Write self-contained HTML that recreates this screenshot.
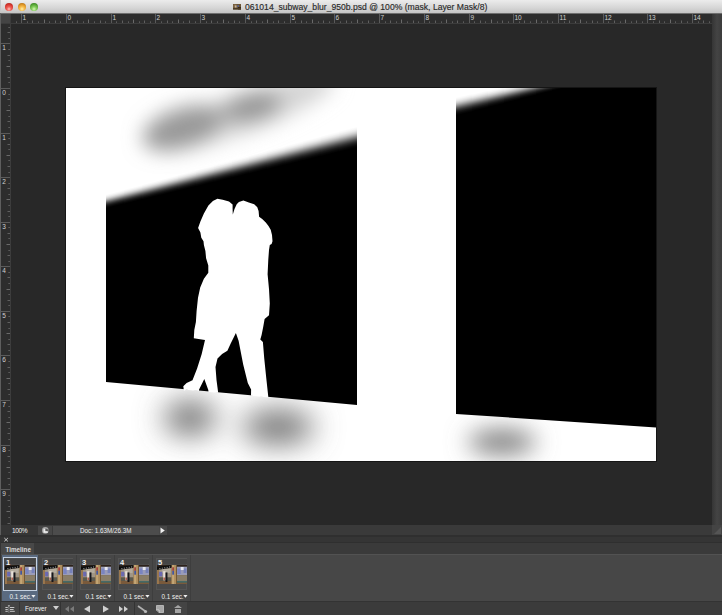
<!DOCTYPE html>
<html><head><meta charset="utf-8">
<style>
*{margin:0;padding:0;box-sizing:border-box}
html,body{width:722px;height:615px;overflow:hidden;background:#282828;font-family:"Liberation Sans",sans-serif}
.a{position:absolute}
#title{left:0;top:0;width:722px;height:14px;background:linear-gradient(#ececec,#d6d6d6 60%,#c4c4c4);border-bottom:1px solid #6e6e6e}
#title .t{left:245px;top:1.5px;font-size:8.6px;line-height:10px;color:#2a2a2a;white-space:nowrap;letter-spacing:0;-webkit-text-stroke:0.15px #2a2a2a}
.light{width:8px;height:8px;border-radius:50%;top:3px}
#strip{left:0;top:0;width:1px;height:535px;background:linear-gradient(#c8c8c8 0,#c8c8c8 13px,#5e5e5e 13px)}
#strip2{left:0;top:535px;width:1px;height:80px;background:#343434}
#rtop{left:11px;top:14px;width:701px;height:9px;background:#2d2d2d}
#rtopb{left:1px;top:23px;width:711px;height:1px;background:#3c3c3c}
#corner{left:1px;top:14px;width:10px;height:10px;background:#444}
#rleft{left:1px;top:24px;width:9px;height:501px;background:#2d2d2d}
#rleftb{left:10px;top:14px;width:1px;height:511px;background:#3c3c3c}
#scroll{left:712px;top:14px;width:10px;height:521px;background:linear-gradient(90deg,#353535,#444 50%,#3c3c3c)}
#doc{left:66px;top:88px;width:590px;height:373px;background:#fff;box-shadow:0 0 0 1px #151515}
svg text{font-family:"Liberation Sans",sans-serif}
</style></head><body>
<div class="a" id="title">
  <div class="a light" style="left:5px;background:radial-gradient(circle at 50% 75%,#ffc8c0 0,#f06058 30%,#d83830 60%,#9a2018 100%)"></div>
  <div class="a light" style="left:18px;background:radial-gradient(circle at 50% 75%,#fff0b0 0,#f8c050 30%,#e09828 60%,#a06010 100%)"></div>
  <div class="a light" style="left:30px;background:radial-gradient(circle at 50% 75%,#d8f8b8 0,#88d060 30%,#58a838 60%,#2a7018 100%)"></div>
  <svg class="a" style="left:233px;top:4px" width="8" height="5.5"><rect width="8" height="5.5" fill="#6a5535"/><rect x="0.5" y="0.5" width="3" height="3" fill="#8a7050"/><rect x="2" y="1.5" width="1.5" height="2" fill="#c8b8a0"/><rect x="4.5" y="1" width="1.2" height="2" fill="#5868b0"/><rect x="5" y="3" width="3" height="2.5" fill="#3a2a18"/><rect x="0" y="4" width="8" height="1.5" fill="#4a3a25"/></svg>
  <div class="a t">061014_subway_blur_950b.psd @ 100% (mask, Layer Mask/8)</div>
</div>
<div class="a" id="strip"></div><div class="a" id="strip2"></div>
<div class="a" id="corner"></div>
<svg class="a" id="rtop" width="701" height="9" viewBox="11 0 701 9" style="font-size:6.5px" fill="#d0d0d0"><line x1="16.5" y1="7.3" x2="16.5" y2="9" stroke="#5a5a5a"/><line x1="21.5" y1="0" x2="21.5" y2="9" stroke="#5a5a5a"/><line x1="27.5" y1="7.3" x2="27.5" y2="9" stroke="#5a5a5a"/><line x1="32.5" y1="6.5" x2="32.5" y2="9" stroke="#606060"/><line x1="38.5" y1="7.3" x2="38.5" y2="9" stroke="#5a5a5a"/><line x1="44.5" y1="5.5" x2="44.5" y2="9" stroke="#6a6a6a"/><line x1="49.5" y1="7.3" x2="49.5" y2="9" stroke="#5a5a5a"/><line x1="55.5" y1="6.5" x2="55.5" y2="9" stroke="#606060"/><line x1="60.5" y1="7.3" x2="60.5" y2="9" stroke="#5a5a5a"/><text x="22.5" y="5.8" >1</text><line x1="66.5" y1="0" x2="66.5" y2="9" stroke="#5a5a5a"/><line x1="72.5" y1="7.3" x2="72.5" y2="9" stroke="#5a5a5a"/><line x1="77.5" y1="6.5" x2="77.5" y2="9" stroke="#606060"/><line x1="83.5" y1="7.3" x2="83.5" y2="9" stroke="#5a5a5a"/><line x1="88.5" y1="5.5" x2="88.5" y2="9" stroke="#6a6a6a"/><line x1="94.5" y1="7.3" x2="94.5" y2="9" stroke="#5a5a5a"/><line x1="100.5" y1="6.5" x2="100.5" y2="9" stroke="#606060"/><line x1="105.5" y1="7.3" x2="105.5" y2="9" stroke="#5a5a5a"/><text x="67.5" y="5.8" >0</text><line x1="111.5" y1="0" x2="111.5" y2="9" stroke="#5a5a5a"/><line x1="116.5" y1="7.3" x2="116.5" y2="9" stroke="#5a5a5a"/><line x1="122.5" y1="6.5" x2="122.5" y2="9" stroke="#606060"/><line x1="128.5" y1="7.3" x2="128.5" y2="9" stroke="#5a5a5a"/><line x1="133.5" y1="5.5" x2="133.5" y2="9" stroke="#6a6a6a"/><line x1="139.5" y1="7.3" x2="139.5" y2="9" stroke="#5a5a5a"/><line x1="144.5" y1="6.5" x2="144.5" y2="9" stroke="#606060"/><line x1="150.5" y1="7.3" x2="150.5" y2="9" stroke="#5a5a5a"/><text x="112.5" y="5.8" >1</text><line x1="155.5" y1="0" x2="155.5" y2="9" stroke="#5a5a5a"/><line x1="161.5" y1="7.3" x2="161.5" y2="9" stroke="#5a5a5a"/><line x1="167.5" y1="6.5" x2="167.5" y2="9" stroke="#606060"/><line x1="172.5" y1="7.3" x2="172.5" y2="9" stroke="#5a5a5a"/><line x1="178.5" y1="5.5" x2="178.5" y2="9" stroke="#6a6a6a"/><line x1="183.5" y1="7.3" x2="183.5" y2="9" stroke="#5a5a5a"/><line x1="189.5" y1="6.5" x2="189.5" y2="9" stroke="#606060"/><line x1="195.5" y1="7.3" x2="195.5" y2="9" stroke="#5a5a5a"/><text x="156.5" y="5.8" >2</text><line x1="200.5" y1="0" x2="200.5" y2="9" stroke="#5a5a5a"/><line x1="206.5" y1="7.3" x2="206.5" y2="9" stroke="#5a5a5a"/><line x1="211.5" y1="6.5" x2="211.5" y2="9" stroke="#606060"/><line x1="217.5" y1="7.3" x2="217.5" y2="9" stroke="#5a5a5a"/><line x1="223.5" y1="5.5" x2="223.5" y2="9" stroke="#6a6a6a"/><line x1="228.5" y1="7.3" x2="228.5" y2="9" stroke="#5a5a5a"/><line x1="234.5" y1="6.5" x2="234.5" y2="9" stroke="#606060"/><line x1="239.5" y1="7.3" x2="239.5" y2="9" stroke="#5a5a5a"/><text x="201.5" y="5.8" >3</text><line x1="245.5" y1="0" x2="245.5" y2="9" stroke="#5a5a5a"/><line x1="251.5" y1="7.3" x2="251.5" y2="9" stroke="#5a5a5a"/><line x1="256.5" y1="6.5" x2="256.5" y2="9" stroke="#606060"/><line x1="262.5" y1="7.3" x2="262.5" y2="9" stroke="#5a5a5a"/><line x1="267.5" y1="5.5" x2="267.5" y2="9" stroke="#6a6a6a"/><line x1="273.5" y1="7.3" x2="273.5" y2="9" stroke="#5a5a5a"/><line x1="278.5" y1="6.5" x2="278.5" y2="9" stroke="#606060"/><line x1="284.5" y1="7.3" x2="284.5" y2="9" stroke="#5a5a5a"/><text x="246.5" y="5.8" >4</text><line x1="290.5" y1="0" x2="290.5" y2="9" stroke="#5a5a5a"/><line x1="295.5" y1="7.3" x2="295.5" y2="9" stroke="#5a5a5a"/><line x1="301.5" y1="6.5" x2="301.5" y2="9" stroke="#606060"/><line x1="306.5" y1="7.3" x2="306.5" y2="9" stroke="#5a5a5a"/><line x1="312.5" y1="5.5" x2="312.5" y2="9" stroke="#6a6a6a"/><line x1="318.5" y1="7.3" x2="318.5" y2="9" stroke="#5a5a5a"/><line x1="323.5" y1="6.5" x2="323.5" y2="9" stroke="#606060"/><line x1="329.5" y1="7.3" x2="329.5" y2="9" stroke="#5a5a5a"/><text x="291.5" y="5.8" >5</text><line x1="334.5" y1="0" x2="334.5" y2="9" stroke="#5a5a5a"/><line x1="340.5" y1="7.3" x2="340.5" y2="9" stroke="#5a5a5a"/><line x1="346.5" y1="6.5" x2="346.5" y2="9" stroke="#606060"/><line x1="351.5" y1="7.3" x2="351.5" y2="9" stroke="#5a5a5a"/><line x1="357.5" y1="5.5" x2="357.5" y2="9" stroke="#6a6a6a"/><line x1="362.5" y1="7.3" x2="362.5" y2="9" stroke="#5a5a5a"/><line x1="368.5" y1="6.5" x2="368.5" y2="9" stroke="#606060"/><line x1="374.5" y1="7.3" x2="374.5" y2="9" stroke="#5a5a5a"/><text x="335.5" y="5.8" >6</text><line x1="379.5" y1="0" x2="379.5" y2="9" stroke="#5a5a5a"/><line x1="385.5" y1="7.3" x2="385.5" y2="9" stroke="#5a5a5a"/><line x1="390.5" y1="6.5" x2="390.5" y2="9" stroke="#606060"/><line x1="396.5" y1="7.3" x2="396.5" y2="9" stroke="#5a5a5a"/><line x1="401.5" y1="5.5" x2="401.5" y2="9" stroke="#6a6a6a"/><line x1="407.5" y1="7.3" x2="407.5" y2="9" stroke="#5a5a5a"/><line x1="413.5" y1="6.5" x2="413.5" y2="9" stroke="#606060"/><line x1="418.5" y1="7.3" x2="418.5" y2="9" stroke="#5a5a5a"/><text x="380.5" y="5.8" >7</text><line x1="424.5" y1="0" x2="424.5" y2="9" stroke="#5a5a5a"/><line x1="429.5" y1="7.3" x2="429.5" y2="9" stroke="#5a5a5a"/><line x1="435.5" y1="6.5" x2="435.5" y2="9" stroke="#606060"/><line x1="441.5" y1="7.3" x2="441.5" y2="9" stroke="#5a5a5a"/><line x1="446.5" y1="5.5" x2="446.5" y2="9" stroke="#6a6a6a"/><line x1="452.5" y1="7.3" x2="452.5" y2="9" stroke="#5a5a5a"/><line x1="457.5" y1="6.5" x2="457.5" y2="9" stroke="#606060"/><line x1="463.5" y1="7.3" x2="463.5" y2="9" stroke="#5a5a5a"/><text x="425.5" y="5.8" >8</text><line x1="469.5" y1="0" x2="469.5" y2="9" stroke="#5a5a5a"/><line x1="474.5" y1="7.3" x2="474.5" y2="9" stroke="#5a5a5a"/><line x1="480.5" y1="6.5" x2="480.5" y2="9" stroke="#606060"/><line x1="485.5" y1="7.3" x2="485.5" y2="9" stroke="#5a5a5a"/><line x1="491.5" y1="5.5" x2="491.5" y2="9" stroke="#6a6a6a"/><line x1="497.5" y1="7.3" x2="497.5" y2="9" stroke="#5a5a5a"/><line x1="502.5" y1="6.5" x2="502.5" y2="9" stroke="#606060"/><line x1="508.5" y1="7.3" x2="508.5" y2="9" stroke="#5a5a5a"/><text x="470.5" y="5.8" >9</text><line x1="513.5" y1="0" x2="513.5" y2="9" stroke="#5a5a5a"/><line x1="519.5" y1="7.3" x2="519.5" y2="9" stroke="#5a5a5a"/><line x1="524.5" y1="6.5" x2="524.5" y2="9" stroke="#606060"/><line x1="530.5" y1="7.3" x2="530.5" y2="9" stroke="#5a5a5a"/><line x1="536.5" y1="5.5" x2="536.5" y2="9" stroke="#6a6a6a"/><line x1="541.5" y1="7.3" x2="541.5" y2="9" stroke="#5a5a5a"/><line x1="547.5" y1="6.5" x2="547.5" y2="9" stroke="#606060"/><line x1="552.5" y1="7.3" x2="552.5" y2="9" stroke="#5a5a5a"/><text x="514.5" y="5.8" >10</text><line x1="558.5" y1="0" x2="558.5" y2="9" stroke="#5a5a5a"/><line x1="564.5" y1="7.3" x2="564.5" y2="9" stroke="#5a5a5a"/><line x1="569.5" y1="6.5" x2="569.5" y2="9" stroke="#606060"/><line x1="575.5" y1="7.3" x2="575.5" y2="9" stroke="#5a5a5a"/><line x1="580.5" y1="5.5" x2="580.5" y2="9" stroke="#6a6a6a"/><line x1="586.5" y1="7.3" x2="586.5" y2="9" stroke="#5a5a5a"/><line x1="592.5" y1="6.5" x2="592.5" y2="9" stroke="#606060"/><line x1="597.5" y1="7.3" x2="597.5" y2="9" stroke="#5a5a5a"/><text x="559.5" y="5.8" >11</text><line x1="603.5" y1="0" x2="603.5" y2="9" stroke="#5a5a5a"/><line x1="608.5" y1="7.3" x2="608.5" y2="9" stroke="#5a5a5a"/><line x1="614.5" y1="6.5" x2="614.5" y2="9" stroke="#606060"/><line x1="620.5" y1="7.3" x2="620.5" y2="9" stroke="#5a5a5a"/><line x1="625.5" y1="5.5" x2="625.5" y2="9" stroke="#6a6a6a"/><line x1="631.5" y1="7.3" x2="631.5" y2="9" stroke="#5a5a5a"/><line x1="636.5" y1="6.5" x2="636.5" y2="9" stroke="#606060"/><line x1="642.5" y1="7.3" x2="642.5" y2="9" stroke="#5a5a5a"/><text x="604.5" y="5.8" >12</text><line x1="647.5" y1="0" x2="647.5" y2="9" stroke="#5a5a5a"/><line x1="653.5" y1="7.3" x2="653.5" y2="9" stroke="#5a5a5a"/><line x1="659.5" y1="6.5" x2="659.5" y2="9" stroke="#606060"/><line x1="664.5" y1="7.3" x2="664.5" y2="9" stroke="#5a5a5a"/><line x1="670.5" y1="5.5" x2="670.5" y2="9" stroke="#6a6a6a"/><line x1="675.5" y1="7.3" x2="675.5" y2="9" stroke="#5a5a5a"/><line x1="681.5" y1="6.5" x2="681.5" y2="9" stroke="#606060"/><line x1="687.5" y1="7.3" x2="687.5" y2="9" stroke="#5a5a5a"/><text x="648.5" y="5.8" >13</text><line x1="692.5" y1="0" x2="692.5" y2="9" stroke="#5a5a5a"/><line x1="698.5" y1="7.3" x2="698.5" y2="9" stroke="#5a5a5a"/><line x1="703.5" y1="6.5" x2="703.5" y2="9" stroke="#606060"/><line x1="709.5" y1="7.3" x2="709.5" y2="9" stroke="#5a5a5a"/><text x="693.5" y="5.8" >14</text></svg>
<svg class="a" id="rleft" width="9" height="501" style="font-size:6.5px" fill="#d0d0d0"><line x1="7.3" y1="3.5" x2="9" y2="3.5" stroke="#5a5a5a"/><line x1="6.5" y1="8.5" x2="9" y2="8.5" stroke="#606060"/><line x1="7.3" y1="14.5" x2="9" y2="14.5" stroke="#5a5a5a"/><line x1="0" y1="19.5" x2="9" y2="19.5" stroke="#5a5a5a"/><line x1="7.3" y1="25.5" x2="9" y2="25.5" stroke="#5a5a5a"/><line x1="6.5" y1="31.5" x2="9" y2="31.5" stroke="#606060"/><line x1="7.3" y1="36.5" x2="9" y2="36.5" stroke="#5a5a5a"/><line x1="5.5" y1="42.5" x2="9" y2="42.5" stroke="#6a6a6a"/><line x1="7.3" y1="47.5" x2="9" y2="47.5" stroke="#5a5a5a"/><line x1="6.5" y1="53.5" x2="9" y2="53.5" stroke="#606060"/><line x1="7.3" y1="58.5" x2="9" y2="58.5" stroke="#5a5a5a"/><text x="1.2" y="25.6">1</text><line x1="0" y1="64.5" x2="9" y2="64.5" stroke="#5a5a5a"/><line x1="7.3" y1="70.5" x2="9" y2="70.5" stroke="#5a5a5a"/><line x1="6.5" y1="75.5" x2="9" y2="75.5" stroke="#606060"/><line x1="7.3" y1="81.5" x2="9" y2="81.5" stroke="#5a5a5a"/><line x1="5.5" y1="86.5" x2="9" y2="86.5" stroke="#6a6a6a"/><line x1="7.3" y1="92.5" x2="9" y2="92.5" stroke="#5a5a5a"/><line x1="6.5" y1="97.5" x2="9" y2="97.5" stroke="#606060"/><line x1="7.3" y1="103.5" x2="9" y2="103.5" stroke="#5a5a5a"/><text x="1.2" y="70.6">0</text><line x1="0" y1="109.5" x2="9" y2="109.5" stroke="#5a5a5a"/><line x1="7.3" y1="114.5" x2="9" y2="114.5" stroke="#5a5a5a"/><line x1="6.5" y1="120.5" x2="9" y2="120.5" stroke="#606060"/><line x1="7.3" y1="125.5" x2="9" y2="125.5" stroke="#5a5a5a"/><line x1="5.5" y1="131.5" x2="9" y2="131.5" stroke="#6a6a6a"/><line x1="7.3" y1="136.5" x2="9" y2="136.5" stroke="#5a5a5a"/><line x1="6.5" y1="142.5" x2="9" y2="142.5" stroke="#606060"/><line x1="7.3" y1="148.5" x2="9" y2="148.5" stroke="#5a5a5a"/><text x="1.2" y="115.6">1</text><line x1="0" y1="153.5" x2="9" y2="153.5" stroke="#5a5a5a"/><line x1="7.3" y1="159.5" x2="9" y2="159.5" stroke="#5a5a5a"/><line x1="6.5" y1="164.5" x2="9" y2="164.5" stroke="#606060"/><line x1="7.3" y1="170.5" x2="9" y2="170.5" stroke="#5a5a5a"/><line x1="5.5" y1="175.5" x2="9" y2="175.5" stroke="#6a6a6a"/><line x1="7.3" y1="181.5" x2="9" y2="181.5" stroke="#5a5a5a"/><line x1="6.5" y1="187.5" x2="9" y2="187.5" stroke="#606060"/><line x1="7.3" y1="192.5" x2="9" y2="192.5" stroke="#5a5a5a"/><text x="1.2" y="159.6">2</text><line x1="0" y1="198.5" x2="9" y2="198.5" stroke="#5a5a5a"/><line x1="7.3" y1="203.5" x2="9" y2="203.5" stroke="#5a5a5a"/><line x1="6.5" y1="209.5" x2="9" y2="209.5" stroke="#606060"/><line x1="7.3" y1="214.5" x2="9" y2="214.5" stroke="#5a5a5a"/><line x1="5.5" y1="220.5" x2="9" y2="220.5" stroke="#6a6a6a"/><line x1="7.3" y1="226.5" x2="9" y2="226.5" stroke="#5a5a5a"/><line x1="6.5" y1="231.5" x2="9" y2="231.5" stroke="#606060"/><line x1="7.3" y1="237.5" x2="9" y2="237.5" stroke="#5a5a5a"/><text x="1.2" y="204.6">3</text><line x1="0" y1="242.5" x2="9" y2="242.5" stroke="#5a5a5a"/><line x1="7.3" y1="248.5" x2="9" y2="248.5" stroke="#5a5a5a"/><line x1="6.5" y1="253.5" x2="9" y2="253.5" stroke="#606060"/><line x1="7.3" y1="259.5" x2="9" y2="259.5" stroke="#5a5a5a"/><line x1="5.5" y1="265.5" x2="9" y2="265.5" stroke="#6a6a6a"/><line x1="7.3" y1="270.5" x2="9" y2="270.5" stroke="#5a5a5a"/><line x1="6.5" y1="276.5" x2="9" y2="276.5" stroke="#606060"/><line x1="7.3" y1="281.5" x2="9" y2="281.5" stroke="#5a5a5a"/><text x="1.2" y="248.60000000000002">4</text><line x1="0" y1="287.5" x2="9" y2="287.5" stroke="#5a5a5a"/><line x1="7.3" y1="292.5" x2="9" y2="292.5" stroke="#5a5a5a"/><line x1="6.5" y1="298.5" x2="9" y2="298.5" stroke="#606060"/><line x1="7.3" y1="304.5" x2="9" y2="304.5" stroke="#5a5a5a"/><line x1="5.5" y1="309.5" x2="9" y2="309.5" stroke="#6a6a6a"/><line x1="7.3" y1="315.5" x2="9" y2="315.5" stroke="#5a5a5a"/><line x1="6.5" y1="320.5" x2="9" y2="320.5" stroke="#606060"/><line x1="7.3" y1="326.5" x2="9" y2="326.5" stroke="#5a5a5a"/><text x="1.2" y="293.6">5</text><line x1="0" y1="331.5" x2="9" y2="331.5" stroke="#5a5a5a"/><line x1="7.3" y1="337.5" x2="9" y2="337.5" stroke="#5a5a5a"/><line x1="6.5" y1="343.5" x2="9" y2="343.5" stroke="#606060"/><line x1="7.3" y1="348.5" x2="9" y2="348.5" stroke="#5a5a5a"/><line x1="5.5" y1="354.5" x2="9" y2="354.5" stroke="#6a6a6a"/><line x1="7.3" y1="359.5" x2="9" y2="359.5" stroke="#5a5a5a"/><line x1="6.5" y1="365.5" x2="9" y2="365.5" stroke="#606060"/><line x1="7.3" y1="370.5" x2="9" y2="370.5" stroke="#5a5a5a"/><text x="1.2" y="337.6">6</text><line x1="0" y1="376.5" x2="9" y2="376.5" stroke="#5a5a5a"/><line x1="7.3" y1="382.5" x2="9" y2="382.5" stroke="#5a5a5a"/><line x1="6.5" y1="387.5" x2="9" y2="387.5" stroke="#606060"/><line x1="7.3" y1="393.5" x2="9" y2="393.5" stroke="#5a5a5a"/><line x1="5.5" y1="398.5" x2="9" y2="398.5" stroke="#6a6a6a"/><line x1="7.3" y1="404.5" x2="9" y2="404.5" stroke="#5a5a5a"/><line x1="6.5" y1="409.5" x2="9" y2="409.5" stroke="#606060"/><line x1="7.3" y1="415.5" x2="9" y2="415.5" stroke="#5a5a5a"/><text x="1.2" y="382.6">7</text><line x1="0" y1="421.5" x2="9" y2="421.5" stroke="#5a5a5a"/><line x1="7.3" y1="426.5" x2="9" y2="426.5" stroke="#5a5a5a"/><line x1="6.5" y1="432.5" x2="9" y2="432.5" stroke="#606060"/><line x1="7.3" y1="437.5" x2="9" y2="437.5" stroke="#5a5a5a"/><line x1="5.5" y1="443.5" x2="9" y2="443.5" stroke="#6a6a6a"/><line x1="7.3" y1="448.5" x2="9" y2="448.5" stroke="#5a5a5a"/><line x1="6.5" y1="454.5" x2="9" y2="454.5" stroke="#606060"/><line x1="7.3" y1="460.5" x2="9" y2="460.5" stroke="#5a5a5a"/><text x="1.2" y="427.6">8</text><line x1="0" y1="465.5" x2="9" y2="465.5" stroke="#5a5a5a"/><line x1="7.3" y1="471.5" x2="9" y2="471.5" stroke="#5a5a5a"/><line x1="6.5" y1="476.5" x2="9" y2="476.5" stroke="#606060"/><line x1="7.3" y1="482.5" x2="9" y2="482.5" stroke="#5a5a5a"/><line x1="5.5" y1="487.5" x2="9" y2="487.5" stroke="#6a6a6a"/><line x1="7.3" y1="493.5" x2="9" y2="493.5" stroke="#5a5a5a"/><line x1="6.5" y1="499.5" x2="9" y2="499.5" stroke="#606060"/><text x="1.2" y="471.6">9</text></svg>
<div class="a" id="rtopb"></div><div class="a" id="rleftb"></div>
<div class="a" id="scroll"></div>
<div class="a" id="doc"></div>
<svg class="a" style="left:66px;top:88px" width="590" height="373" viewBox="66 88 590 373">
<defs><linearGradient id="gl0" gradientUnits="userSpaceOnUse" x1="113.33" y1="192.63" x2="116.67" y2="205.66"><stop offset="0.00" stop-color="#fff" stop-opacity="1.000"/><stop offset="0.10" stop-color="#fff" stop-opacity="0.966"/><stop offset="0.20" stop-color="#fff" stop-opacity="0.903"/><stop offset="0.30" stop-color="#fff" stop-opacity="0.802"/><stop offset="0.40" stop-color="#fff" stop-opacity="0.663"/><stop offset="0.50" stop-color="#fff" stop-opacity="0.500"/><stop offset="0.60" stop-color="#fff" stop-opacity="0.337"/><stop offset="0.70" stop-color="#fff" stop-opacity="0.198"/><stop offset="0.80" stop-color="#fff" stop-opacity="0.097"/><stop offset="0.90" stop-color="#fff" stop-opacity="0.034"/><stop offset="1.00" stop-color="#fff" stop-opacity="0.000"/></linearGradient><linearGradient id="gl1" gradientUnits="userSpaceOnUse" x1="131.26" y1="187.75" x2="134.74" y2="201.29"><stop offset="0.00" stop-color="#fff" stop-opacity="1.000"/><stop offset="0.10" stop-color="#fff" stop-opacity="0.966"/><stop offset="0.20" stop-color="#fff" stop-opacity="0.903"/><stop offset="0.30" stop-color="#fff" stop-opacity="0.802"/><stop offset="0.40" stop-color="#fff" stop-opacity="0.663"/><stop offset="0.50" stop-color="#fff" stop-opacity="0.500"/><stop offset="0.60" stop-color="#fff" stop-opacity="0.337"/><stop offset="0.70" stop-color="#fff" stop-opacity="0.198"/><stop offset="0.80" stop-color="#fff" stop-opacity="0.097"/><stop offset="0.90" stop-color="#fff" stop-opacity="0.034"/><stop offset="1.00" stop-color="#fff" stop-opacity="0.000"/></linearGradient><linearGradient id="gl2" gradientUnits="userSpaceOnUse" x1="149.20" y1="182.88" x2="152.80" y2="196.91"><stop offset="0.00" stop-color="#fff" stop-opacity="1.000"/><stop offset="0.10" stop-color="#fff" stop-opacity="0.966"/><stop offset="0.20" stop-color="#fff" stop-opacity="0.903"/><stop offset="0.30" stop-color="#fff" stop-opacity="0.802"/><stop offset="0.40" stop-color="#fff" stop-opacity="0.663"/><stop offset="0.50" stop-color="#fff" stop-opacity="0.500"/><stop offset="0.60" stop-color="#fff" stop-opacity="0.337"/><stop offset="0.70" stop-color="#fff" stop-opacity="0.198"/><stop offset="0.80" stop-color="#fff" stop-opacity="0.097"/><stop offset="0.90" stop-color="#fff" stop-opacity="0.034"/><stop offset="1.00" stop-color="#fff" stop-opacity="0.000"/></linearGradient><linearGradient id="gl3" gradientUnits="userSpaceOnUse" x1="167.13" y1="178.00" x2="170.87" y2="192.53"><stop offset="0.00" stop-color="#fff" stop-opacity="1.000"/><stop offset="0.10" stop-color="#fff" stop-opacity="0.966"/><stop offset="0.20" stop-color="#fff" stop-opacity="0.903"/><stop offset="0.30" stop-color="#fff" stop-opacity="0.802"/><stop offset="0.40" stop-color="#fff" stop-opacity="0.663"/><stop offset="0.50" stop-color="#fff" stop-opacity="0.500"/><stop offset="0.60" stop-color="#fff" stop-opacity="0.337"/><stop offset="0.70" stop-color="#fff" stop-opacity="0.198"/><stop offset="0.80" stop-color="#fff" stop-opacity="0.097"/><stop offset="0.90" stop-color="#fff" stop-opacity="0.034"/><stop offset="1.00" stop-color="#fff" stop-opacity="0.000"/></linearGradient><linearGradient id="gl4" gradientUnits="userSpaceOnUse" x1="185.07" y1="173.12" x2="188.93" y2="188.16"><stop offset="0.00" stop-color="#fff" stop-opacity="1.000"/><stop offset="0.10" stop-color="#fff" stop-opacity="0.966"/><stop offset="0.20" stop-color="#fff" stop-opacity="0.903"/><stop offset="0.30" stop-color="#fff" stop-opacity="0.802"/><stop offset="0.40" stop-color="#fff" stop-opacity="0.663"/><stop offset="0.50" stop-color="#fff" stop-opacity="0.500"/><stop offset="0.60" stop-color="#fff" stop-opacity="0.337"/><stop offset="0.70" stop-color="#fff" stop-opacity="0.198"/><stop offset="0.80" stop-color="#fff" stop-opacity="0.097"/><stop offset="0.90" stop-color="#fff" stop-opacity="0.034"/><stop offset="1.00" stop-color="#fff" stop-opacity="0.000"/></linearGradient><linearGradient id="gl5" gradientUnits="userSpaceOnUse" x1="203.00" y1="168.25" x2="207.00" y2="183.78"><stop offset="0.00" stop-color="#fff" stop-opacity="1.000"/><stop offset="0.10" stop-color="#fff" stop-opacity="0.966"/><stop offset="0.20" stop-color="#fff" stop-opacity="0.903"/><stop offset="0.30" stop-color="#fff" stop-opacity="0.802"/><stop offset="0.40" stop-color="#fff" stop-opacity="0.663"/><stop offset="0.50" stop-color="#fff" stop-opacity="0.500"/><stop offset="0.60" stop-color="#fff" stop-opacity="0.337"/><stop offset="0.70" stop-color="#fff" stop-opacity="0.198"/><stop offset="0.80" stop-color="#fff" stop-opacity="0.097"/><stop offset="0.90" stop-color="#fff" stop-opacity="0.034"/><stop offset="1.00" stop-color="#fff" stop-opacity="0.000"/></linearGradient><linearGradient id="gl6" gradientUnits="userSpaceOnUse" x1="220.94" y1="163.37" x2="225.06" y2="179.41"><stop offset="0.00" stop-color="#fff" stop-opacity="1.000"/><stop offset="0.10" stop-color="#fff" stop-opacity="0.966"/><stop offset="0.20" stop-color="#fff" stop-opacity="0.903"/><stop offset="0.30" stop-color="#fff" stop-opacity="0.802"/><stop offset="0.40" stop-color="#fff" stop-opacity="0.663"/><stop offset="0.50" stop-color="#fff" stop-opacity="0.500"/><stop offset="0.60" stop-color="#fff" stop-opacity="0.337"/><stop offset="0.70" stop-color="#fff" stop-opacity="0.198"/><stop offset="0.80" stop-color="#fff" stop-opacity="0.097"/><stop offset="0.90" stop-color="#fff" stop-opacity="0.034"/><stop offset="1.00" stop-color="#fff" stop-opacity="0.000"/></linearGradient><linearGradient id="gl7" gradientUnits="userSpaceOnUse" x1="238.38" y1="158.63" x2="242.62" y2="175.15"><stop offset="0.00" stop-color="#fff" stop-opacity="1.000"/><stop offset="0.10" stop-color="#fff" stop-opacity="0.966"/><stop offset="0.20" stop-color="#fff" stop-opacity="0.903"/><stop offset="0.30" stop-color="#fff" stop-opacity="0.802"/><stop offset="0.40" stop-color="#fff" stop-opacity="0.663"/><stop offset="0.50" stop-color="#fff" stop-opacity="0.500"/><stop offset="0.60" stop-color="#fff" stop-opacity="0.337"/><stop offset="0.70" stop-color="#fff" stop-opacity="0.198"/><stop offset="0.80" stop-color="#fff" stop-opacity="0.097"/><stop offset="0.90" stop-color="#fff" stop-opacity="0.034"/><stop offset="1.00" stop-color="#fff" stop-opacity="0.000"/></linearGradient><linearGradient id="gl8" gradientUnits="userSpaceOnUse" x1="255.81" y1="153.89" x2="260.19" y2="170.90"><stop offset="0.00" stop-color="#fff" stop-opacity="1.000"/><stop offset="0.10" stop-color="#fff" stop-opacity="0.966"/><stop offset="0.20" stop-color="#fff" stop-opacity="0.903"/><stop offset="0.30" stop-color="#fff" stop-opacity="0.802"/><stop offset="0.40" stop-color="#fff" stop-opacity="0.663"/><stop offset="0.50" stop-color="#fff" stop-opacity="0.500"/><stop offset="0.60" stop-color="#fff" stop-opacity="0.337"/><stop offset="0.70" stop-color="#fff" stop-opacity="0.198"/><stop offset="0.80" stop-color="#fff" stop-opacity="0.097"/><stop offset="0.90" stop-color="#fff" stop-opacity="0.034"/><stop offset="1.00" stop-color="#fff" stop-opacity="0.000"/></linearGradient><linearGradient id="gl9" gradientUnits="userSpaceOnUse" x1="273.75" y1="149.01" x2="278.25" y2="166.52"><stop offset="0.00" stop-color="#fff" stop-opacity="1.000"/><stop offset="0.10" stop-color="#fff" stop-opacity="0.966"/><stop offset="0.20" stop-color="#fff" stop-opacity="0.903"/><stop offset="0.30" stop-color="#fff" stop-opacity="0.802"/><stop offset="0.40" stop-color="#fff" stop-opacity="0.663"/><stop offset="0.50" stop-color="#fff" stop-opacity="0.500"/><stop offset="0.60" stop-color="#fff" stop-opacity="0.337"/><stop offset="0.70" stop-color="#fff" stop-opacity="0.198"/><stop offset="0.80" stop-color="#fff" stop-opacity="0.097"/><stop offset="0.90" stop-color="#fff" stop-opacity="0.034"/><stop offset="1.00" stop-color="#fff" stop-opacity="0.000"/></linearGradient><linearGradient id="gl10" gradientUnits="userSpaceOnUse" x1="291.69" y1="144.14" x2="296.31" y2="162.15"><stop offset="0.00" stop-color="#fff" stop-opacity="1.000"/><stop offset="0.10" stop-color="#fff" stop-opacity="0.966"/><stop offset="0.20" stop-color="#fff" stop-opacity="0.903"/><stop offset="0.30" stop-color="#fff" stop-opacity="0.802"/><stop offset="0.40" stop-color="#fff" stop-opacity="0.663"/><stop offset="0.50" stop-color="#fff" stop-opacity="0.500"/><stop offset="0.60" stop-color="#fff" stop-opacity="0.337"/><stop offset="0.70" stop-color="#fff" stop-opacity="0.198"/><stop offset="0.80" stop-color="#fff" stop-opacity="0.097"/><stop offset="0.90" stop-color="#fff" stop-opacity="0.034"/><stop offset="1.00" stop-color="#fff" stop-opacity="0.000"/></linearGradient><linearGradient id="gl11" gradientUnits="userSpaceOnUse" x1="309.62" y1="139.26" x2="314.38" y2="157.77"><stop offset="0.00" stop-color="#fff" stop-opacity="1.000"/><stop offset="0.10" stop-color="#fff" stop-opacity="0.966"/><stop offset="0.20" stop-color="#fff" stop-opacity="0.903"/><stop offset="0.30" stop-color="#fff" stop-opacity="0.802"/><stop offset="0.40" stop-color="#fff" stop-opacity="0.663"/><stop offset="0.50" stop-color="#fff" stop-opacity="0.500"/><stop offset="0.60" stop-color="#fff" stop-opacity="0.337"/><stop offset="0.70" stop-color="#fff" stop-opacity="0.198"/><stop offset="0.80" stop-color="#fff" stop-opacity="0.097"/><stop offset="0.90" stop-color="#fff" stop-opacity="0.034"/><stop offset="1.00" stop-color="#fff" stop-opacity="0.000"/></linearGradient><linearGradient id="gl12" gradientUnits="userSpaceOnUse" x1="327.56" y1="134.39" x2="332.44" y2="153.39"><stop offset="0.00" stop-color="#fff" stop-opacity="1.000"/><stop offset="0.10" stop-color="#fff" stop-opacity="0.966"/><stop offset="0.20" stop-color="#fff" stop-opacity="0.903"/><stop offset="0.30" stop-color="#fff" stop-opacity="0.802"/><stop offset="0.40" stop-color="#fff" stop-opacity="0.663"/><stop offset="0.50" stop-color="#fff" stop-opacity="0.500"/><stop offset="0.60" stop-color="#fff" stop-opacity="0.337"/><stop offset="0.70" stop-color="#fff" stop-opacity="0.198"/><stop offset="0.80" stop-color="#fff" stop-opacity="0.097"/><stop offset="0.90" stop-color="#fff" stop-opacity="0.034"/><stop offset="1.00" stop-color="#fff" stop-opacity="0.000"/></linearGradient><linearGradient id="gl13" gradientUnits="userSpaceOnUse" x1="345.49" y1="129.51" x2="350.51" y2="149.02"><stop offset="0.00" stop-color="#fff" stop-opacity="1.000"/><stop offset="0.10" stop-color="#fff" stop-opacity="0.966"/><stop offset="0.20" stop-color="#fff" stop-opacity="0.903"/><stop offset="0.30" stop-color="#fff" stop-opacity="0.802"/><stop offset="0.40" stop-color="#fff" stop-opacity="0.663"/><stop offset="0.50" stop-color="#fff" stop-opacity="0.500"/><stop offset="0.60" stop-color="#fff" stop-opacity="0.337"/><stop offset="0.70" stop-color="#fff" stop-opacity="0.198"/><stop offset="0.80" stop-color="#fff" stop-opacity="0.097"/><stop offset="0.90" stop-color="#fff" stop-opacity="0.034"/><stop offset="1.00" stop-color="#fff" stop-opacity="0.000"/></linearGradient><linearGradient id="gr0" gradientUnits="userSpaceOnUse" x1="461.99" y1="96.05" x2="466.01" y2="113.19"><stop offset="0.00" stop-color="#fff" stop-opacity="1.000"/><stop offset="0.10" stop-color="#fff" stop-opacity="0.966"/><stop offset="0.20" stop-color="#fff" stop-opacity="0.903"/><stop offset="0.30" stop-color="#fff" stop-opacity="0.802"/><stop offset="0.40" stop-color="#fff" stop-opacity="0.663"/><stop offset="0.50" stop-color="#fff" stop-opacity="0.500"/><stop offset="0.60" stop-color="#fff" stop-opacity="0.337"/><stop offset="0.70" stop-color="#fff" stop-opacity="0.198"/><stop offset="0.80" stop-color="#fff" stop-opacity="0.097"/><stop offset="0.90" stop-color="#fff" stop-opacity="0.034"/><stop offset="1.00" stop-color="#fff" stop-opacity="0.000"/></linearGradient><linearGradient id="gr1" gradientUnits="userSpaceOnUse" x1="478.07" y1="92.66" x2="481.93" y2="109.06"><stop offset="0.00" stop-color="#fff" stop-opacity="1.000"/><stop offset="0.10" stop-color="#fff" stop-opacity="0.966"/><stop offset="0.20" stop-color="#fff" stop-opacity="0.903"/><stop offset="0.30" stop-color="#fff" stop-opacity="0.802"/><stop offset="0.40" stop-color="#fff" stop-opacity="0.663"/><stop offset="0.50" stop-color="#fff" stop-opacity="0.500"/><stop offset="0.60" stop-color="#fff" stop-opacity="0.337"/><stop offset="0.70" stop-color="#fff" stop-opacity="0.198"/><stop offset="0.80" stop-color="#fff" stop-opacity="0.097"/><stop offset="0.90" stop-color="#fff" stop-opacity="0.034"/><stop offset="1.00" stop-color="#fff" stop-opacity="0.000"/></linearGradient><linearGradient id="gr2" gradientUnits="userSpaceOnUse" x1="494.16" y1="89.27" x2="497.84" y2="104.93"><stop offset="0.00" stop-color="#fff" stop-opacity="1.000"/><stop offset="0.10" stop-color="#fff" stop-opacity="0.966"/><stop offset="0.20" stop-color="#fff" stop-opacity="0.903"/><stop offset="0.30" stop-color="#fff" stop-opacity="0.802"/><stop offset="0.40" stop-color="#fff" stop-opacity="0.663"/><stop offset="0.50" stop-color="#fff" stop-opacity="0.500"/><stop offset="0.60" stop-color="#fff" stop-opacity="0.337"/><stop offset="0.70" stop-color="#fff" stop-opacity="0.198"/><stop offset="0.80" stop-color="#fff" stop-opacity="0.097"/><stop offset="0.90" stop-color="#fff" stop-opacity="0.034"/><stop offset="1.00" stop-color="#fff" stop-opacity="0.000"/></linearGradient><linearGradient id="gr3" gradientUnits="userSpaceOnUse" x1="510.25" y1="85.89" x2="513.75" y2="100.79"><stop offset="0.00" stop-color="#fff" stop-opacity="1.000"/><stop offset="0.10" stop-color="#fff" stop-opacity="0.966"/><stop offset="0.20" stop-color="#fff" stop-opacity="0.903"/><stop offset="0.30" stop-color="#fff" stop-opacity="0.802"/><stop offset="0.40" stop-color="#fff" stop-opacity="0.663"/><stop offset="0.50" stop-color="#fff" stop-opacity="0.500"/><stop offset="0.60" stop-color="#fff" stop-opacity="0.337"/><stop offset="0.70" stop-color="#fff" stop-opacity="0.198"/><stop offset="0.80" stop-color="#fff" stop-opacity="0.097"/><stop offset="0.90" stop-color="#fff" stop-opacity="0.034"/><stop offset="1.00" stop-color="#fff" stop-opacity="0.000"/></linearGradient><linearGradient id="gr4" gradientUnits="userSpaceOnUse" x1="526.34" y1="82.50" x2="529.66" y2="96.66"><stop offset="0.00" stop-color="#fff" stop-opacity="1.000"/><stop offset="0.10" stop-color="#fff" stop-opacity="0.966"/><stop offset="0.20" stop-color="#fff" stop-opacity="0.903"/><stop offset="0.30" stop-color="#fff" stop-opacity="0.802"/><stop offset="0.40" stop-color="#fff" stop-opacity="0.663"/><stop offset="0.50" stop-color="#fff" stop-opacity="0.500"/><stop offset="0.60" stop-color="#fff" stop-opacity="0.337"/><stop offset="0.70" stop-color="#fff" stop-opacity="0.198"/><stop offset="0.80" stop-color="#fff" stop-opacity="0.097"/><stop offset="0.90" stop-color="#fff" stop-opacity="0.034"/><stop offset="1.00" stop-color="#fff" stop-opacity="0.000"/></linearGradient><linearGradient id="gr5" gradientUnits="userSpaceOnUse" x1="542.42" y1="79.11" x2="545.58" y2="92.53"><stop offset="0.00" stop-color="#fff" stop-opacity="1.000"/><stop offset="0.10" stop-color="#fff" stop-opacity="0.966"/><stop offset="0.20" stop-color="#fff" stop-opacity="0.903"/><stop offset="0.30" stop-color="#fff" stop-opacity="0.802"/><stop offset="0.40" stop-color="#fff" stop-opacity="0.663"/><stop offset="0.50" stop-color="#fff" stop-opacity="0.500"/><stop offset="0.60" stop-color="#fff" stop-opacity="0.337"/><stop offset="0.70" stop-color="#fff" stop-opacity="0.198"/><stop offset="0.80" stop-color="#fff" stop-opacity="0.097"/><stop offset="0.90" stop-color="#fff" stop-opacity="0.034"/><stop offset="1.00" stop-color="#fff" stop-opacity="0.000"/></linearGradient><linearGradient id="gr6" gradientUnits="userSpaceOnUse" x1="558.49" y1="75.64" x2="561.51" y2="88.48"><stop offset="0.00" stop-color="#fff" stop-opacity="1.000"/><stop offset="0.10" stop-color="#fff" stop-opacity="0.966"/><stop offset="0.20" stop-color="#fff" stop-opacity="0.903"/><stop offset="0.30" stop-color="#fff" stop-opacity="0.802"/><stop offset="0.40" stop-color="#fff" stop-opacity="0.663"/><stop offset="0.50" stop-color="#fff" stop-opacity="0.500"/><stop offset="0.60" stop-color="#fff" stop-opacity="0.337"/><stop offset="0.70" stop-color="#fff" stop-opacity="0.198"/><stop offset="0.80" stop-color="#fff" stop-opacity="0.097"/><stop offset="0.90" stop-color="#fff" stop-opacity="0.034"/><stop offset="1.00" stop-color="#fff" stop-opacity="0.000"/></linearGradient><linearGradient id="gr7" gradientUnits="userSpaceOnUse" x1="574.49" y1="71.88" x2="577.51" y2="84.72"><stop offset="0.00" stop-color="#fff" stop-opacity="1.000"/><stop offset="0.10" stop-color="#fff" stop-opacity="0.966"/><stop offset="0.20" stop-color="#fff" stop-opacity="0.903"/><stop offset="0.30" stop-color="#fff" stop-opacity="0.802"/><stop offset="0.40" stop-color="#fff" stop-opacity="0.663"/><stop offset="0.50" stop-color="#fff" stop-opacity="0.500"/><stop offset="0.60" stop-color="#fff" stop-opacity="0.337"/><stop offset="0.70" stop-color="#fff" stop-opacity="0.198"/><stop offset="0.80" stop-color="#fff" stop-opacity="0.097"/><stop offset="0.90" stop-color="#fff" stop-opacity="0.034"/><stop offset="1.00" stop-color="#fff" stop-opacity="0.000"/></linearGradient><linearGradient id="gr8" gradientUnits="userSpaceOnUse" x1="590.49" y1="68.12" x2="593.51" y2="80.96"><stop offset="0.00" stop-color="#fff" stop-opacity="1.000"/><stop offset="0.10" stop-color="#fff" stop-opacity="0.966"/><stop offset="0.20" stop-color="#fff" stop-opacity="0.903"/><stop offset="0.30" stop-color="#fff" stop-opacity="0.802"/><stop offset="0.40" stop-color="#fff" stop-opacity="0.663"/><stop offset="0.50" stop-color="#fff" stop-opacity="0.500"/><stop offset="0.60" stop-color="#fff" stop-opacity="0.337"/><stop offset="0.70" stop-color="#fff" stop-opacity="0.198"/><stop offset="0.80" stop-color="#fff" stop-opacity="0.097"/><stop offset="0.90" stop-color="#fff" stop-opacity="0.034"/><stop offset="1.00" stop-color="#fff" stop-opacity="0.000"/></linearGradient><linearGradient id="gr9" gradientUnits="userSpaceOnUse" x1="606.49" y1="64.36" x2="609.51" y2="77.20"><stop offset="0.00" stop-color="#fff" stop-opacity="1.000"/><stop offset="0.10" stop-color="#fff" stop-opacity="0.966"/><stop offset="0.20" stop-color="#fff" stop-opacity="0.903"/><stop offset="0.30" stop-color="#fff" stop-opacity="0.802"/><stop offset="0.40" stop-color="#fff" stop-opacity="0.663"/><stop offset="0.50" stop-color="#fff" stop-opacity="0.500"/><stop offset="0.60" stop-color="#fff" stop-opacity="0.337"/><stop offset="0.70" stop-color="#fff" stop-opacity="0.198"/><stop offset="0.80" stop-color="#fff" stop-opacity="0.097"/><stop offset="0.90" stop-color="#fff" stop-opacity="0.034"/><stop offset="1.00" stop-color="#fff" stop-opacity="0.000"/></linearGradient>
<filter id="b10" x="-50%" y="-50%" width="200%" height="200%"><feGaussianBlur stdDeviation="10"/></filter>
<filter id="b14" x="-50%" y="-50%" width="200%" height="200%"><feGaussianBlur stdDeviation="15"/></filter>
<filter id="b12" x="-80%" y="-80%" width="260%" height="260%"><feGaussianBlur stdDeviation="12"/></filter>
<filter id="b06"><feGaussianBlur stdDeviation="0.5"/></filter>
</defs>
<rect x="66" y="88" width="590" height="373" fill="#fff"/>
<polygon points="106,189.5 357,119.0 357,405.0 106,382.0" fill="#000"/><polygon points="456,94.5 656,47.5 656,427.6 456,413.9" fill="#000"/><polygon shape-rendering="crispEdges" points="106,164.7 124,160.1 124,207.6 106,212.2" fill="url(#gl0)"/><polygon shape-rendering="crispEdges" points="124,159.8 142,155.2 142,203.2 124,207.8" fill="url(#gl1)"/><polygon shape-rendering="crispEdges" points="142,155.0 160,150.3 160,198.8 142,203.5" fill="url(#gl2)"/><polygon shape-rendering="crispEdges" points="160,150.1 178,145.5 178,194.5 160,199.1" fill="url(#gl3)"/><polygon shape-rendering="crispEdges" points="178,145.2 196,140.6 196,190.1 178,194.7" fill="url(#gl4)"/><polygon shape-rendering="crispEdges" points="196,140.3 214,135.7 214,185.7 196,190.3" fill="url(#gl5)"/><polygon shape-rendering="crispEdges" points="214,135.4 232,130.8 232,181.4 214,186.0" fill="url(#gl6)"/><polygon shape-rendering="crispEdges" points="232,130.5 249,126.2 249,177.2 232,181.6" fill="url(#gl7)"/><polygon shape-rendering="crispEdges" points="249,125.9 267,121.3 267,172.9 249,177.5" fill="url(#gl8)"/><polygon shape-rendering="crispEdges" points="267,121.0 285,116.4 285,168.5 267,173.1" fill="url(#gl9)"/><polygon shape-rendering="crispEdges" points="285,116.2 303,111.5 303,164.1 285,168.8" fill="url(#gl10)"/><polygon shape-rendering="crispEdges" points="303,111.3 321,106.6 321,159.8 303,164.4" fill="url(#gl11)"/><polygon shape-rendering="crispEdges" points="321,106.4 339,101.8 339,155.4 321,160.0" fill="url(#gl12)"/><polygon shape-rendering="crispEdges" points="339,101.5 357,96.9 357,151.0 339,155.6" fill="url(#gl13)"/><polygon shape-rendering="crispEdges" points="456,67.7 472,63.9 472,115.5 456,119.3" fill="url(#gr0)"/><polygon shape-rendering="crispEdges" points="472,64.3 488,60.6 488,111.4 472,115.2" fill="url(#gr1)"/><polygon shape-rendering="crispEdges" points="488,60.9 504,57.2 504,107.3 488,111.0" fill="url(#gr2)"/><polygon shape-rendering="crispEdges" points="504,57.6 520,53.8 520,103.1 504,106.9" fill="url(#gr3)"/><polygon shape-rendering="crispEdges" points="520,54.2 536,50.4 536,99.0 520,102.7" fill="url(#gr4)"/><polygon shape-rendering="crispEdges" points="536,50.8 552,47.1 552,94.8 536,98.6" fill="url(#gr5)"/><polygon shape-rendering="crispEdges" points="552,47.3 568,43.6 568,90.8 552,94.5" fill="url(#gr6)"/><polygon shape-rendering="crispEdges" points="568,43.6 584,39.8 584,87.0 568,90.8" fill="url(#gr7)"/><polygon shape-rendering="crispEdges" points="584,39.8 600,36.1 600,83.3 584,87.0" fill="url(#gr8)"/><polygon shape-rendering="crispEdges" points="600,36.1 616,32.3 616,79.5 600,83.3" fill="url(#gr9)"/>
<g style="mix-blend-mode:multiply">
<g filter="url(#b10)">
<ellipse cx="245" cy="112" rx="95" ry="20" transform="rotate(-20 245 112)" fill="#d4d4d4"/>
<ellipse cx="183" cy="128" rx="42" ry="20" transform="rotate(-18 183 128)" fill="#999"/>
<ellipse cx="252" cy="107" rx="30" ry="14" transform="rotate(-12 252 107)" fill="#959595"/>
</g>
<g filter="url(#b14)">
<ellipse cx="190" cy="418" rx="26" ry="17" fill="#6a6a6a"/>
<ellipse cx="278" cy="427" rx="36" ry="17" fill="#707070"/>
</g>
<g filter="url(#b12)"><ellipse cx="502" cy="442" rx="34" ry="12" fill="#777"/></g></g>
<path filter="url(#b06)" fill="#fff" d="M198.1,227.9 L200.4,221.6 L203.9,213.6 L208.4,205.5 L212.9,201 L217.4,198.8 L222.7,199.7 L229,201.5 L232.6,204.6 L232.6,208.7 L232.8,214.5 L234.5,209.1 L236.7,204.2 L238.9,202 L243.4,200.6 L248.8,202.4 L254.2,204.2 L257.3,207.3 L258.6,210.9 L259.1,216.7 L262.2,218.9 L265.8,222.5 L268.5,226.1 L270.7,229.7 L272,235 L272.5,241.3 L271.6,244 L269.8,244.9 L269,250 L268.3,259.6 L267.6,274.3 L269,288.9 L269.8,303.5 L269,315.2 L264.6,318.9 L263.2,327 L261.6,335 L260.3,339.5 L262.9,342.1 L264.2,357.9 L266.2,377.6 L268.2,396 L268.2,397.4 L251,395.8 L251.1,389.5 L247.8,382.9 L243.2,364.5 L238.6,340.8 L235.9,332.9 L230.7,343.4 L227.4,350.7 L222.1,353.9 L217.5,358.6 L215.5,367.1 L216.5,380 L218.2,392.8 L208.5,391.9 L208.3,390.1 L204.3,379 L199.1,389.5 L199,391.0 L186,389.8 L183.9,390.8 L183.3,386.2 L186.6,382.9 L192.5,380.3 L197.1,368.4 L201.7,353.9 L205,340.1 L193.8,338.2 L194.3,330 L195.9,322 L196.6,310.9 L198,297.7 L200.2,287.4 L203.9,278.7 L208.3,272.8 L208.3,265.5 L206.1,258.2 L205.4,250.9 L203.9,245 L203.5,241.3 L201.3,237.7 L200.4,232.4Z"/>
</svg>
<div class="a" style="left:1px;top:525px;width:721px;height:10px;background:#3a3a3a"></div>
<div class="a" style="left:1px;top:525px;width:37px;height:10px;background:#363636"></div>
<div class="a" style="left:12px;top:525.8px;font-size:6.6px;color:#f0f0f0;line-height:9px;letter-spacing:-0.45px">100%</div>
<div class="a" style="left:38px;top:526px;width:14px;height:9px;background:#474747"></div>
<svg class="a" style="left:41px;top:526px" width="9" height="9"><circle cx="4.3" cy="4.4" r="3.3" fill="#a4a4a4"/><path d="M4.6,2.6 L7.6,3.8 L7.4,5.8 L4.6,5.6Z" fill="#5a5a5a"/><path d="M3.2,2.8 V6 H6.8" stroke="#f4f4f4" stroke-width="1.3" fill="none"/></svg>
<div class="a" style="left:53px;top:526px;width:106px;height:9px;background:#4c4c4c"></div>
<div class="a" style="left:80px;top:526px;font-size:6.3px;color:#ececec;line-height:9px;white-space:nowrap">Doc: 1.63M/26.3M</div>
<div class="a" style="left:159px;top:526px;width:8px;height:9px;background:#474747"></div>
<svg class="a" style="left:159px;top:526px" width="8" height="9"><path d="M1.5,1.5 L5.8,4.5 L1.5,7.5Z" fill="#f0f0f0"/></svg>
<div class="a" style="left:712px;top:525px;width:10px;height:10px;background:#444"></div>
<svg class="a" style="left:712px;top:525px" width="10" height="10"><path d="M9,2 L2,9 H9Z" fill="#555"/></svg>
<div class="a" style="left:1px;top:535px;width:721px;height:8px;background:#2f2f2f"></div>
<div class="a" style="left:1px;top:537px;width:721px;height:5px;background:#353535"></div>
<svg class="a" style="left:3px;top:537px" width="7" height="6"><path d="M1.3,1 L4.9,4.4 M4.9,1 L1.3,4.4" stroke="#d8d8d8" stroke-width="0.9"/></svg>
<div class="a" style="left:1px;top:543px;width:721px;height:12px;background:#3a3a3a"></div>
<div class="a" style="left:1px;top:543px;width:33px;height:12px;background:#484848"></div>
<div class="a" style="left:5.5px;top:544.5px;font-size:6.3px;font-weight:bold;color:#dcdcdc;line-height:10px">Timeline</div>
<div class="a" style="left:1px;top:554px;width:721px;height:1px;background:#525252"></div>
<div class="a" style="left:1px;top:555px;width:721px;height:46px;background:#474747"></div>
<svg width="0" height="0" style="position:absolute"><defs><filter id="tb"><feGaussianBlur stdDeviation="0.35"/></filter></defs></svg><div class="a" style="left:1.5px;top:555px;width:36.5px;height:46px;background:#5a6a80"></div><div class="a" style="left:3px;top:557px;width:34px;height:34px;border:1px solid #c4d0e0;background:#4a4a4a"></div><div class="a" style="left:10px;top:558.5px;width:25px;height:5.5px;background:#444"></div><div class="a" style="left:6px;top:558.5px;font-size:7.5px;font-weight:bold;color:#f0f0f0;line-height:8px">1</div><svg class="a" style="left:5px;top:565px" width="30" height="19" viewBox="0 0 31 19" preserveAspectRatio="none"><g filter="url(#tb)">
<rect width="31" height="19" fill="#6a5a44"/>
<rect x="0" y="0" width="31" height="2" fill="#2e241a"/>
<rect x="2" y="3" width="13" height="9.5" fill="#a09686"/>
<rect x="5" y="4" width="9" height="4" fill="#b4ac9e"/>
<rect x="2" y="12.5" width="13" height="3.5" fill="#5a5a50"/>
<rect x="2.2" y="6.8" width="3.3" height="4.6" fill="#6a68b0"/>
<rect x="0" y="15.9" width="31" height="3.1" fill="#7a5a3a"/>
<rect x="0" y="4" width="2" height="15" fill="#9a7850"/>
<rect x="20.5" y="1.7" width="10.5" height="8.5" fill="#9a9cb8"/>
<rect x="21" y="3.5" width="3.5" height="5.5" fill="#7a84c0"/>
<rect x="27.5" y="3.5" width="3" height="4.5" fill="#7480b8"/>
<rect x="24.5" y="2" width="3" height="3" fill="#e8e8f0"/>
<rect x="20.5" y="10.2" width="10.5" height="6.3" fill="#8a7e68"/>
<rect x="20.5" y="16.3" width="10.5" height="1.2" fill="#2a6a70"/>
<rect x="14.9" y="0" width="5.6" height="19" fill="#b09060"/>
<rect x="15.8" y="0" width="1.6" height="19" fill="#c8aa7a"/>
<rect x="19.6" y="0" width="0.9" height="19" fill="#6a5030"/>
<rect x="15.8" y="2.3" width="1.7" height="3.5" fill="#a03838"/>
<rect x="15.8" y="5.8" width="1.7" height="3.9" fill="#3a50a0"/>
<rect x="6.4" y="6.2" width="2.4" height="9.1" fill="#e8e0d8"/>
<rect x="6.6" y="12.5" width="1.8" height="2.5" fill="#b06050"/>
<rect x="8.8" y="7.4" width="2" height="9.6" fill="#18181e"/>
<path d="M0,1.7 L14.9,0.3 L14.9,2.8 L0,5.1Z" fill="#0e0e0e"/>
<path d="M2.5,3.6 h1 M5,3.2 h1 M7.5,2.8 h1 M10,2.4 h1 M12.5,2 h1" stroke="#d8d8d8" stroke-width="0.8"/>
</g>
</svg><div class="a" style="left:9.5px;top:593px;font-size:6.3px;color:#f0f0f0;line-height:8px;white-space:nowrap">0.1 sec.</div><svg class="a" style="left:31px;top:594px" width="6" height="5"><path d="M0.3,1 H4.5 L2.4,3.8Z" fill="#f0f0f0"/></svg><div class="a" style="left:76px;top:555px;width:1px;height:46px;background:#3e3e3e"></div><div class="a" style="left:42px;top:558px;width:31px;height:32px;border:1px solid #545454;background:#4a4a4a"></div><div class="a" style="left:48px;top:558.5px;width:25px;height:5.5px;background:#444"></div><div class="a" style="left:44px;top:558.5px;font-size:7.5px;font-weight:bold;color:#f0f0f0;line-height:8px">2</div><svg class="a" style="left:43px;top:565px" width="30" height="19" viewBox="0 0 31 19" preserveAspectRatio="none"><g filter="url(#tb)">
<rect width="31" height="19" fill="#6a5a44"/>
<rect x="0" y="0" width="31" height="2" fill="#2e241a"/>
<rect x="2" y="3" width="13" height="9.5" fill="#a09686"/>
<rect x="5" y="4" width="9" height="4" fill="#b4ac9e"/>
<rect x="2" y="12.5" width="13" height="3.5" fill="#5a5a50"/>
<rect x="2.2" y="6.8" width="3.3" height="4.6" fill="#6a68b0"/>
<rect x="0" y="15.9" width="31" height="3.1" fill="#7a5a3a"/>
<rect x="0" y="4" width="2" height="15" fill="#9a7850"/>
<rect x="20.5" y="1.7" width="10.5" height="8.5" fill="#9a9cb8"/>
<rect x="21" y="3.5" width="3.5" height="5.5" fill="#7a84c0"/>
<rect x="27.5" y="3.5" width="3" height="4.5" fill="#7480b8"/>
<rect x="24.5" y="2" width="3" height="3" fill="#e8e8f0"/>
<rect x="20.5" y="10.2" width="10.5" height="6.3" fill="#8a7e68"/>
<rect x="20.5" y="16.3" width="10.5" height="1.2" fill="#2a6a70"/>
<rect x="14.9" y="0" width="5.6" height="19" fill="#b09060"/>
<rect x="15.8" y="0" width="1.6" height="19" fill="#c8aa7a"/>
<rect x="19.6" y="0" width="0.9" height="19" fill="#6a5030"/>
<rect x="15.8" y="2.3" width="1.7" height="3.5" fill="#a03838"/>
<rect x="15.8" y="5.8" width="1.7" height="3.9" fill="#3a50a0"/>
<rect x="6.4" y="6.2" width="2.4" height="9.1" fill="#e8e0d8"/>
<rect x="6.6" y="12.5" width="1.8" height="2.5" fill="#b06050"/>
<rect x="8.8" y="7.4" width="2" height="9.6" fill="#18181e"/>
<path d="M0,1.7 L14.9,0.3 L14.9,2.8 L0,5.1Z" fill="#0e0e0e"/>
<path d="M2.5,3.6 h1 M5,3.2 h1 M7.5,2.8 h1 M10,2.4 h1 M12.5,2 h1" stroke="#d8d8d8" stroke-width="0.8"/>
</g>
</svg><div class="a" style="left:47.5px;top:593px;font-size:6.3px;color:#f0f0f0;line-height:8px;white-space:nowrap">0.1 sec.</div><svg class="a" style="left:69px;top:594px" width="6" height="5"><path d="M0.3,1 H4.5 L2.4,3.8Z" fill="#f0f0f0"/></svg><div class="a" style="left:114px;top:555px;width:1px;height:46px;background:#3e3e3e"></div><div class="a" style="left:80px;top:558px;width:31px;height:32px;border:1px solid #545454;background:#4a4a4a"></div><div class="a" style="left:86px;top:558.5px;width:25px;height:5.5px;background:#444"></div><div class="a" style="left:82px;top:558.5px;font-size:7.5px;font-weight:bold;color:#f0f0f0;line-height:8px">3</div><svg class="a" style="left:81px;top:565px" width="30" height="19" viewBox="0 0 31 19" preserveAspectRatio="none"><g filter="url(#tb)">
<rect width="31" height="19" fill="#6a5a44"/>
<rect x="0" y="0" width="31" height="2" fill="#2e241a"/>
<rect x="2" y="3" width="13" height="9.5" fill="#a09686"/>
<rect x="5" y="4" width="9" height="4" fill="#b4ac9e"/>
<rect x="2" y="12.5" width="13" height="3.5" fill="#5a5a50"/>
<rect x="2.2" y="6.8" width="3.3" height="4.6" fill="#6a68b0"/>
<rect x="0" y="15.9" width="31" height="3.1" fill="#7a5a3a"/>
<rect x="0" y="4" width="2" height="15" fill="#9a7850"/>
<rect x="20.5" y="1.7" width="10.5" height="8.5" fill="#9a9cb8"/>
<rect x="21" y="3.5" width="3.5" height="5.5" fill="#7a84c0"/>
<rect x="27.5" y="3.5" width="3" height="4.5" fill="#7480b8"/>
<rect x="24.5" y="2" width="3" height="3" fill="#e8e8f0"/>
<rect x="20.5" y="10.2" width="10.5" height="6.3" fill="#8a7e68"/>
<rect x="20.5" y="16.3" width="10.5" height="1.2" fill="#2a6a70"/>
<rect x="14.9" y="0" width="5.6" height="19" fill="#b09060"/>
<rect x="15.8" y="0" width="1.6" height="19" fill="#c8aa7a"/>
<rect x="19.6" y="0" width="0.9" height="19" fill="#6a5030"/>
<rect x="15.8" y="2.3" width="1.7" height="3.5" fill="#a03838"/>
<rect x="15.8" y="5.8" width="1.7" height="3.9" fill="#3a50a0"/>
<rect x="6.4" y="6.2" width="2.4" height="9.1" fill="#e8e0d8"/>
<rect x="6.6" y="12.5" width="1.8" height="2.5" fill="#b06050"/>
<rect x="8.8" y="7.4" width="2" height="9.6" fill="#18181e"/>
<path d="M0,1.7 L14.9,0.3 L14.9,2.8 L0,5.1Z" fill="#0e0e0e"/>
<path d="M2.5,3.6 h1 M5,3.2 h1 M7.5,2.8 h1 M10,2.4 h1 M12.5,2 h1" stroke="#d8d8d8" stroke-width="0.8"/>
</g>
</svg><div class="a" style="left:85.5px;top:593px;font-size:6.3px;color:#f0f0f0;line-height:8px;white-space:nowrap">0.1 sec.</div><svg class="a" style="left:107px;top:594px" width="6" height="5"><path d="M0.3,1 H4.5 L2.4,3.8Z" fill="#f0f0f0"/></svg><div class="a" style="left:152px;top:555px;width:1px;height:46px;background:#3e3e3e"></div><div class="a" style="left:118px;top:558px;width:31px;height:32px;border:1px solid #545454;background:#4a4a4a"></div><div class="a" style="left:124px;top:558.5px;width:25px;height:5.5px;background:#444"></div><div class="a" style="left:120px;top:558.5px;font-size:7.5px;font-weight:bold;color:#f0f0f0;line-height:8px">4</div><svg class="a" style="left:119px;top:565px" width="30" height="19" viewBox="0 0 31 19" preserveAspectRatio="none"><g filter="url(#tb)">
<rect width="31" height="19" fill="#6a5a44"/>
<rect x="0" y="0" width="31" height="2" fill="#2e241a"/>
<rect x="2" y="3" width="13" height="9.5" fill="#a09686"/>
<rect x="5" y="4" width="9" height="4" fill="#b4ac9e"/>
<rect x="2" y="12.5" width="13" height="3.5" fill="#5a5a50"/>
<rect x="2.2" y="6.8" width="3.3" height="4.6" fill="#6a68b0"/>
<rect x="0" y="15.9" width="31" height="3.1" fill="#7a5a3a"/>
<rect x="0" y="4" width="2" height="15" fill="#9a7850"/>
<rect x="20.5" y="1.7" width="10.5" height="8.5" fill="#9a9cb8"/>
<rect x="21" y="3.5" width="3.5" height="5.5" fill="#7a84c0"/>
<rect x="27.5" y="3.5" width="3" height="4.5" fill="#7480b8"/>
<rect x="24.5" y="2" width="3" height="3" fill="#e8e8f0"/>
<rect x="20.5" y="10.2" width="10.5" height="6.3" fill="#8a7e68"/>
<rect x="20.5" y="16.3" width="10.5" height="1.2" fill="#2a6a70"/>
<rect x="14.9" y="0" width="5.6" height="19" fill="#b09060"/>
<rect x="15.8" y="0" width="1.6" height="19" fill="#c8aa7a"/>
<rect x="19.6" y="0" width="0.9" height="19" fill="#6a5030"/>
<rect x="15.8" y="2.3" width="1.7" height="3.5" fill="#a03838"/>
<rect x="15.8" y="5.8" width="1.7" height="3.9" fill="#3a50a0"/>
<rect x="6.4" y="6.2" width="2.4" height="9.1" fill="#e8e0d8"/>
<rect x="6.6" y="12.5" width="1.8" height="2.5" fill="#b06050"/>
<rect x="8.8" y="7.4" width="2" height="9.6" fill="#18181e"/>
<path d="M0,1.7 L14.9,0.3 L14.9,2.8 L0,5.1Z" fill="#0e0e0e"/>
<path d="M2.5,3.6 h1 M5,3.2 h1 M7.5,2.8 h1 M10,2.4 h1 M12.5,2 h1" stroke="#d8d8d8" stroke-width="0.8"/>
</g>
</svg><div class="a" style="left:123.5px;top:593px;font-size:6.3px;color:#f0f0f0;line-height:8px;white-space:nowrap">0.1 sec.</div><svg class="a" style="left:145px;top:594px" width="6" height="5"><path d="M0.3,1 H4.5 L2.4,3.8Z" fill="#f0f0f0"/></svg><div class="a" style="left:190px;top:555px;width:1px;height:46px;background:#3e3e3e"></div><div class="a" style="left:156px;top:558px;width:31px;height:32px;border:1px solid #545454;background:#4a4a4a"></div><div class="a" style="left:162px;top:558.5px;width:25px;height:5.5px;background:#444"></div><div class="a" style="left:158px;top:558.5px;font-size:7.5px;font-weight:bold;color:#f0f0f0;line-height:8px">5</div><svg class="a" style="left:157px;top:565px" width="30" height="19" viewBox="0 0 31 19" preserveAspectRatio="none"><g filter="url(#tb)">
<rect width="31" height="19" fill="#6a5a44"/>
<rect x="0" y="0" width="31" height="2" fill="#2e241a"/>
<rect x="2" y="3" width="13" height="9.5" fill="#a09686"/>
<rect x="5" y="4" width="9" height="4" fill="#b4ac9e"/>
<rect x="2" y="12.5" width="13" height="3.5" fill="#5a5a50"/>
<rect x="2.2" y="6.8" width="3.3" height="4.6" fill="#6a68b0"/>
<rect x="0" y="15.9" width="31" height="3.1" fill="#7a5a3a"/>
<rect x="0" y="4" width="2" height="15" fill="#9a7850"/>
<rect x="20.5" y="1.7" width="10.5" height="8.5" fill="#9a9cb8"/>
<rect x="21" y="3.5" width="3.5" height="5.5" fill="#7a84c0"/>
<rect x="27.5" y="3.5" width="3" height="4.5" fill="#7480b8"/>
<rect x="24.5" y="2" width="3" height="3" fill="#e8e8f0"/>
<rect x="20.5" y="10.2" width="10.5" height="6.3" fill="#8a7e68"/>
<rect x="20.5" y="16.3" width="10.5" height="1.2" fill="#2a6a70"/>
<rect x="14.9" y="0" width="5.6" height="19" fill="#b09060"/>
<rect x="15.8" y="0" width="1.6" height="19" fill="#c8aa7a"/>
<rect x="19.6" y="0" width="0.9" height="19" fill="#6a5030"/>
<rect x="15.8" y="2.3" width="1.7" height="3.5" fill="#a03838"/>
<rect x="15.8" y="5.8" width="1.7" height="3.9" fill="#3a50a0"/>
<rect x="6.4" y="6.2" width="2.4" height="9.1" fill="#e8e0d8"/>
<rect x="6.6" y="12.5" width="1.8" height="2.5" fill="#b06050"/>
<rect x="8.8" y="7.4" width="2" height="9.6" fill="#18181e"/>
<path d="M0,1.7 L14.9,0.3 L14.9,2.8 L0,5.1Z" fill="#0e0e0e"/>
<path d="M2.5,3.6 h1 M5,3.2 h1 M7.5,2.8 h1 M10,2.4 h1 M12.5,2 h1" stroke="#d8d8d8" stroke-width="0.8"/>
</g>
</svg><div class="a" style="left:161.5px;top:593px;font-size:6.3px;color:#f0f0f0;line-height:8px;white-space:nowrap">0.1 sec.</div><svg class="a" style="left:183px;top:594px" width="6" height="5"><path d="M0.3,1 H4.5 L2.4,3.8Z" fill="#f0f0f0"/></svg>
<div class="a" style="left:1px;top:601px;width:721px;height:14px;background:#3b3b3b"></div>
<div class="a" style="left:1px;top:601px;width:721px;height:1px;background:#333"></div>
<div class="a" style="left:1px;top:602px;width:186px;height:13px;background:#444"></div>
<div class="a" style="left:19px;top:602px;width:1px;height:13px;background:#333"></div>
<div class="a" style="left:60px;top:602px;width:1px;height:13px;background:#333"></div>
<div class="a" style="left:134px;top:602px;width:1px;height:13px;background:#333"></div>
<div class="a" style="left:25px;top:603px;font-size:6.3px;color:#f2f2f2;line-height:11px">Forever</div>
<svg class="a" style="left:1px;top:602px" width="186" height="13">
<g stroke="#d4d4d4" stroke-width="0.9"><path d="M4.4,5.5 H6.8 M9,5.5 H13.3 M4.4,7.5 H6.8 M9,7.5 H12.6 M4.4,9.3 H6.8 M9,9.3 H13.8"/></g><path d="M7.9,3.6 V10.8" stroke="#8a8a8a" stroke-width="0.9"/><path d="M6.6,3.2 H9.2 L7.9,4.8Z" fill="#bdbdbd"/>
<path d="M52,4 H58 L55,8Z" fill="#d0d0d0"/>
<path d="M68,4 L64,7 L68,10Z M73,4 L69,7 L73,10Z" fill="#7a7a7a"/>
<path d="M89,3.5 L83,7 L89,10.5Z" fill="#cfcfcf"/>
<path d="M102,3.5 L108,7 L102,10.5Z" fill="#cfcfcf"/>
<path d="M118,4 L122,7 L118,10Z M123,4 L127,7 L123,10Z" fill="#cfcfcf"/>
<path d="M137,4 L144,9" stroke="#b0b0b0" stroke-width="1.6"/><circle cx="144.5" cy="9.5" r="1.6" fill="#b8b8b8"/>
<path d="M155.5,3.5 H162.5 V10.5 H158 L155.5,8Z" fill="#a8a8a8" stroke="#b4b4b4"/><path d="M155.5,8 L158,8 L158,10.5" fill="#6a6a6a" stroke="#e0e0e0" stroke-width="0.8"/>
<path d="M173,6 L177,3 L181,6Z M174,7 H180 V11 H174Z" fill="#a4a4a4"/>
</svg>

</body></html>
